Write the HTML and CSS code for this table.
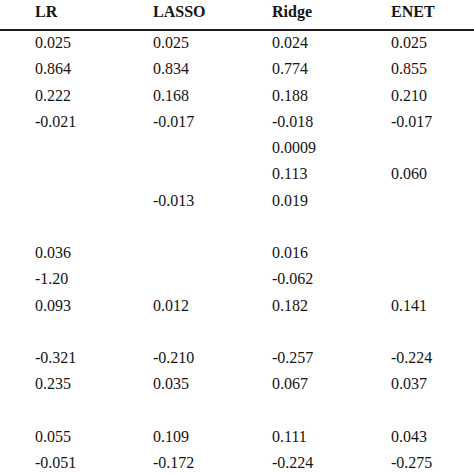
FILE: index.html
```html
<!DOCTYPE html>
<html>
<head>
<meta charset="utf-8">
<link rel="stylesheet" href="styles.css">
</head>
<body>
<div class="table">
  <div class="row head"><span>LR</span><span>LASSO</span><span>Ridge</span><span>ENET</span></div>
  <div class="body">
    <div class="row"><span>0.025</span><span>0.025</span><span>0.024</span><span>0.025</span></div>
    <div class="row"><span>0.864</span><span>0.834</span><span>0.774</span><span>0.855</span></div>
    <div class="row"><span>0.222</span><span>0.168</span><span>0.188</span><span>0.210</span></div>
    <div class="row"><span>-0.021</span><span>-0.017</span><span>-0.018</span><span>-0.017</span></div>
    <div class="row"><span></span><span></span><span>0.0009</span><span></span></div>
    <div class="row"><span></span><span></span><span>0.113</span><span>0.060</span></div>
    <div class="row"><span></span><span>-0.013</span><span>0.019</span><span></span></div>
    <div class="row"><span></span><span></span><span></span><span></span></div>
    <div class="row"><span>0.036</span><span></span><span>0.016</span><span></span></div>
    <div class="row"><span>-1.20</span><span></span><span>-0.062</span><span></span></div>
    <div class="row"><span>0.093</span><span>0.012</span><span>0.182</span><span>0.141</span></div>
    <div class="row"><span></span><span></span><span></span><span></span></div>
    <div class="row"><span>-0.321</span><span>-0.210</span><span>-0.257</span><span>-0.224</span></div>
    <div class="row"><span>0.235</span><span>0.035</span><span>0.067</span><span>0.037</span></div>
    <div class="row"><span></span><span></span><span></span><span></span></div>
    <div class="row"><span>0.055</span><span>0.109</span><span>0.111</span><span>0.043</span></div>
    <div class="row"><span>-0.051</span><span>-0.172</span><span>-0.224</span><span>-0.275</span></div>
  </div>
</div>
</body>
</html>
```
FILE: styles.css
```css
html, body {
  margin: 0;
  padding: 0;
  background: #fff;
}
body {
  width: 474px;
  height: 474px;
  overflow: hidden;
  font-family: "Liberation Serif", "Times New Roman", serif;
  font-size: 16px;
  color: #141414;
}
.table {
  display: flex;
  flex-direction: column;
}
.row {
  display: grid;
  grid-template-columns: 118px 119px 119px 1fr;
  padding-left: 35px;
  height: 26.25px;
  line-height: 23.25px;
  white-space: nowrap;
}
.head {
  font-weight: bold;
  height: 29px;
  line-height: 23px;
  border-bottom: 2px solid #1a1a1a;
}
```
